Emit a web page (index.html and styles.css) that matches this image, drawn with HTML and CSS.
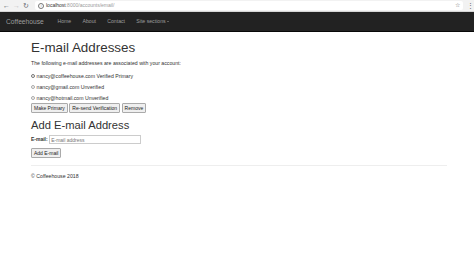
FILE: index.html
```html
<!DOCTYPE html>
<html lang="en">
<head>
  <meta charset="UTF-8">
  <title>Coffeehouse - E-mail Addresses</title>
  <link rel="stylesheet" href="styles.css">
</head>
<body>

<!-- Browser toolbar -->
<div class="toolbar">
  <span class="tb-icon">&#8592;</span>
  <span class="tb-icon faded">&#8594;</span>
  <span class="tb-icon">&#8635;</span>
  <div class="address">
    <span class="info">i</span>
    <span class="host">localhost</span><span class="path">:8000/accounts/email/</span>
    <span class="spacer"></span>
    <span class="star">&#9734;</span>
  </div>
  <span class="menu">&#8942;</span>
</div>

<nav class="navbar">
  <a class="brand" href="#">Coffeehouse</a>
  <ul class="nav">
    <li><a href="#">Home</a></li>
    <li><a href="#">About</a></li>
    <li><a href="#">Contact</a></li>
    <li><a href="#">Site sections<span class="caret"></span></a></li>
  </ul>
</nav>

<div class="container">
  <h1>E-mail Addresses</h1>
  <p>The following e-mail addresses are associated with your account:</p>

  <form class="email-list">
    <div class="radio">
      <label><input type="radio" name="email" checked> nancy@coffeehouse.com Verified Primary</label>
    </div>
    <div class="radio">
      <label><input type="radio" name="email"> nancy@gmail.com Unverified</label>
    </div>
    <div class="radio">
      <label><input type="radio" name="email"> nancy@hotmail.com Unverified</label>
    </div>
    <div class="buttons">
      <button type="button">Make Primary</button>
      <button type="button">Re-send Verification</button>
      <button type="button">Remove</button>
    </div>
  </form>

  <h2>Add E-mail Address</h2>
  <form class="add-form">
    <div class="field">
      <label for="email">E-mail:</label>
      <input type="email" id="email" placeholder="E-mail address">
    </div>
    <button type="submit">Add E-mail</button>
  </form>

  <hr>
  <footer>&copy; Coffeehouse 2018</footer>
</div>

</body>
</html>
```

FILE: styles.css
```css
body {
  font-family: "Liberation Sans", Arial, sans-serif;
  font-size: 5.2px;
  line-height: 7.5px;
  color: #333;
  background-color: white;
  margin: 0;
  padding: 0;
}

/* browser toolbar */
.toolbar {
  height: 12px;
  background-color: #f2f2f2;
  border-bottom: 1px solid #d6d6d6;
  box-sizing: border-box;
  display: flex;
  align-items: center;
  padding: 0 3px;
  gap: 4px;
  color: #5f6368;
}

.tb-icon {
  font-size: 7px;
  width: 6px;
  text-align: center;
}

.tb-icon.faded {
  color: #c4c4c4;
}

.address {
  flex: 1;
  height: 9px;
  background-color: white;
  border-radius: 2px;
  display: flex;
  align-items: center;
  padding: 0 3px;
  font-size: 5px;
  margin-left: 2px;
}

.info {
  width: 4px;
  height: 4px;
  border: 0.7px solid #777;
  border-radius: 50%;
  font-size: 3px;
  line-height: 4px;
  text-align: center;
  margin-right: 2px;
}

.host {
  color: #333;
}

.path {
  color: #999;
}

.spacer {
  flex: 1;
}

.star {
  font-size: 6px;
  color: #777;
}

.menu {
  font-size: 7px;
  width: 4px;
}

/* navbar */
.navbar {
  height: 20px;
  background-color: #222;
  border-bottom: 1px solid #080808;
  box-sizing: border-box;
  display: flex;
  align-items: center;
}

.navbar a {
  color: #9d9d9d;
  text-decoration: none;
}

.brand {
  font-size: 6.7px;
  color: #c8c8c8;
  padding: 0 8px 0 6px;
}

.nav {
  list-style: none;
  margin: 0;
  padding: 0;
  display: flex;
}

.nav a {
  display: block;
  padding: 0 5.6px;
  font-size: 5.2px;
}

.caret {
  display: inline-block;
  margin-left: 1px;
  vertical-align: middle;
  border-top: 1.5px solid #9d9d9d;
  border-left: 1.5px solid transparent;
  border-right: 1.5px solid transparent;
}

/* content */
.container {
  width: 416px;
  margin-left: 31px;
}

h1 {
  font-size: 13.4px;
  font-weight: normal;
  line-height: 1.1;
  margin: 8.5px 0 4.5px;
}

h2 {
  font-size: 11.2px;
  font-weight: normal;
  line-height: 1.1;
  margin: 6.5px 0 3.7px;
}

p {
  margin: 0 0 2px;
}

.radio {
  padding-top: 3.5px;
}

.radio label {
  display: flex;
  align-items: center;
}

.radio input {
  appearance: none;
  width: 4px;
  height: 4px;
  margin: 0 1.5px 0 0;
  border: 0.6px solid #aaa;
  border-radius: 50%;
  background-color: #f6f6f6;
  box-sizing: border-box;
}

.radio input:checked {
  border-color: #777;
  background: radial-gradient(circle, #444 0 35%, #f6f6f6 45%);
}

.buttons {
  display: flex;
  gap: 1.5px;
  margin-top: 0.5px;
}

button {
  font-family: "Liberation Sans", Arial, sans-serif;
  font-size: 5px;
  line-height: 6px;
  padding: 1px 2px;
  background-color: #efefef;
  border: 0.7px solid #aaa;
  border-radius: 1px;
  color: #222;
}

.field {
  margin-bottom: 3.7px;
  display: flex;
  align-items: center;
  gap: 1px;
}

.field label {
  font-weight: bold;
  font-size: 5px;
}

.field input {
  width: 92px;
  height: 9px;
  box-sizing: border-box;
  font-size: 5px;
  padding: 0 1.5px;
  border: 0.7px solid #ccc;
}

hr {
  margin: 7px 0;
  border: 0;
  border-top: 1px solid #eee;
}

footer {
  font-size: 5.2px;
}
```
